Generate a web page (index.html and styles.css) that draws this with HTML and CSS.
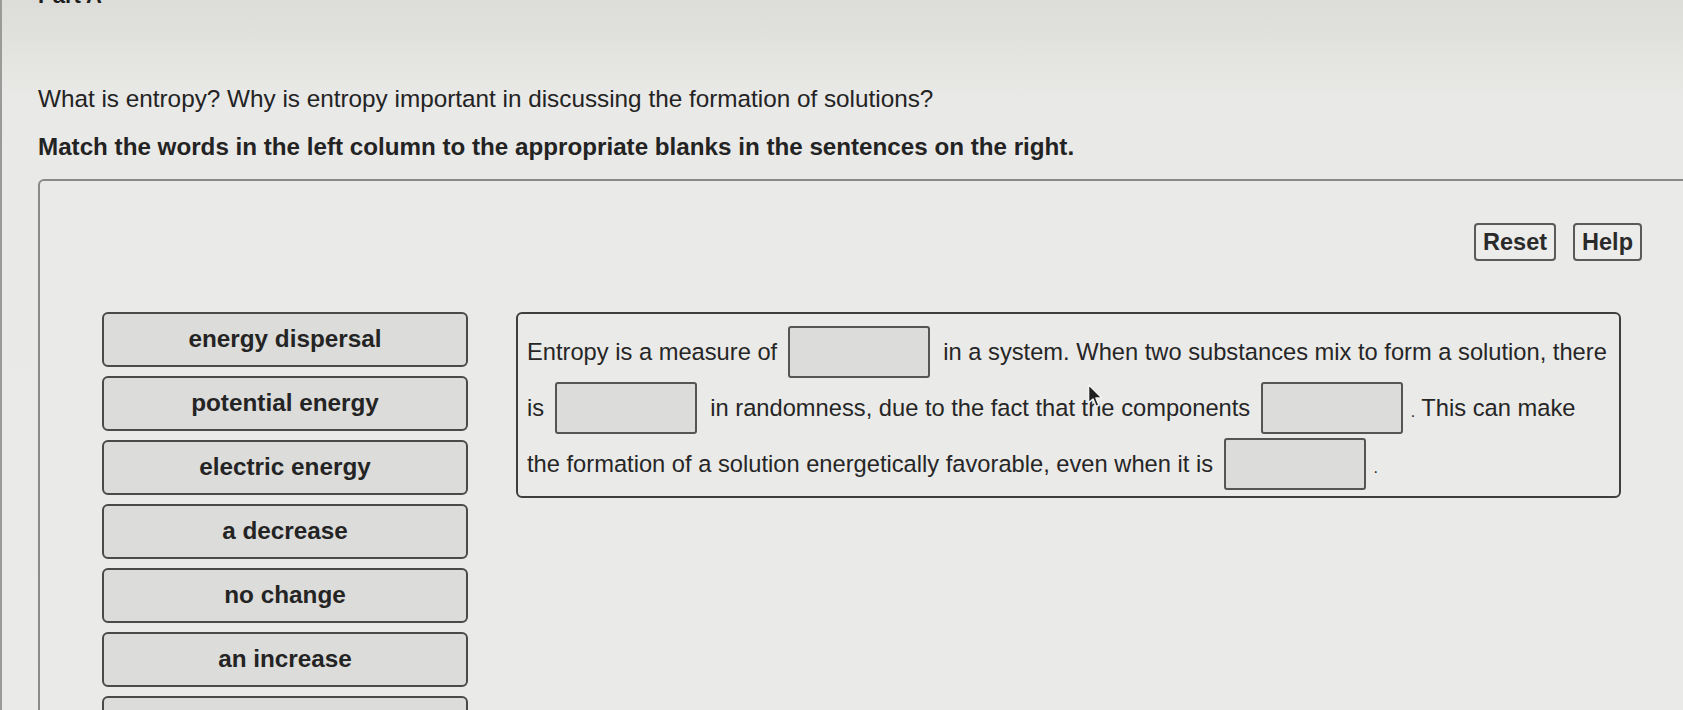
FILE: index.html
```html
<!DOCTYPE html>
<html lang="en">
<head>
<meta charset="utf-8">
<title>Entropy matching</title>
<link rel="stylesheet" href="styles.css">
</head>
<body>
<div class="page">
  <h2 class="part">Part A</h2>
  <p class="question">What is entropy? Why is entropy important in discussing the formation of solutions?</p>
  <p class="instructions">Match the words in the left column to the appropriate blanks in the sentences on the right.</p>
  <div class="panel">
    <div class="toolbar">
      <button class="btn">Reset</button>
      <button class="btn">Help</button>
    </div>
    <div class="workspace">
      <div class="choices">
        <div class="choice">energy dispersal</div>
        <div class="choice">potential energy</div>
        <div class="choice">electric energy</div>
        <div class="choice">a decrease</div>
        <div class="choice">no change</div>
        <div class="choice">an increase</div>
        <div class="choice"></div>
      </div>
      <div class="sentences">
        <div class="line">Entropy is a measure of <span class="blank"></span> in a system. When two substances mix to form a solution, there</div>
        <div class="line">is <span class="blank"></span> in randomness, due to the fact that <span class="cursor-host">the<svg class="cursor" width="16" height="26" viewBox="0 0 16 26"><path d="M1.5 1.5 L1.5 20 L6 16 L9 23.5 L12 22.3 L9 15 L15 15 Z" fill="#1f1f1f" stroke="#f2f2f2" stroke-width="1.6" stroke-linejoin="round"/></svg></span> components <span class="blank"></span><span class="dot">.</span> This can make</div>
        <div class="line">the formation of a solution energetically favorable, even when it is <span class="blank"></span><span class="dot">.</span></div>
      </div>
    </div>
  </div>
</div>
</body>
</html>
```
FILE: styles.css
```css
html, body {
  margin: 0;
  padding: 0;
}
body {
  width: 1683px;
  height: 710px;
  overflow: hidden;
  background: linear-gradient(to bottom, #dcdcd9 0px, #e3e3e0 55px, #e9e9e7 100px, #eaeae8 100%);
  font-family: "Liberation Sans", Arial, sans-serif;
  color: #232323;
  border-left: 2px solid #9a9a98;
  box-sizing: border-box;
}
.page {
  padding-left: 36px;
}
.part {
  margin: -17px 0 0 0;
  font-size: 22px;
  font-weight: bold;
  line-height: 26px;
  color: #1e1e1e;
}
.question {
  margin: 76px 0 0 0;
  font-size: 24.3px;
  line-height: 28px;
}
.instructions {
  margin: 20px 0 0 0;
  font-size: 24.2px;
  font-weight: bold;
  line-height: 28px;
}
.panel {
  margin-top: 18px;
  width: 1720px;
  height: 600px;
  box-sizing: border-box;
  border: 2px solid #8a8a88;
  border-radius: 6px;
  padding: 42px 0 0 62px;
  background: #eaeae8;
}
.toolbar {
  width: 1540px;
  display: flex;
  justify-content: flex-end;
  gap: 17px;
}
.btn {
  font-family: "Liberation Sans", Arial, sans-serif;
  font-size: 23.5px;
  font-weight: bold;
  color: #2a2a2a;
  background: #ececea;
  border: 2px solid #5a5a5a;
  border-radius: 4px;
  height: 38px;
  padding: 0 7px;
  line-height: 32px;
}
.workspace {
  margin-top: 51px;
  display: flex;
  align-items: flex-start;
  gap: 48px;
}
.choices {
  width: 366px;
  display: flex;
  flex-direction: column;
  gap: 9px;
}
.choice {
  height: 55px;
  box-sizing: border-box;
  border: 2px solid #4a4a4a;
  border-radius: 6px;
  background: #dcdcda;
  font-size: 24.3px;
  font-weight: bold;
  text-align: center;
  line-height: 49px;
  color: #242424;
}
.sentences {
  width: 1105px;
  height: 186px;
  box-sizing: border-box;
  border: 2px solid #3f3f3f;
  border-radius: 6px;
  padding: 10px 8px 0 9px;
  font-size: 23.7px;
  color: #262626;
}
.line {
  height: 56px;
  display: flex;
  align-items: center;
  white-space: pre;
}
.blank {
  display: inline-block;
  width: 142px;
  height: 52px;
  box-sizing: border-box;
  border: 2px solid #555;
  border-radius: 3px;
  background: #dcdcda;
  margin: 0 7px 0 4px;
}
.dot {
  margin-left: 1px;
  margin-top: 8px;
  font-size: 16px;
}
.cursor-host {
  position: relative;
}
.cursor {
  position: absolute;
  left: 5px;
  top: -12px;
}
```
